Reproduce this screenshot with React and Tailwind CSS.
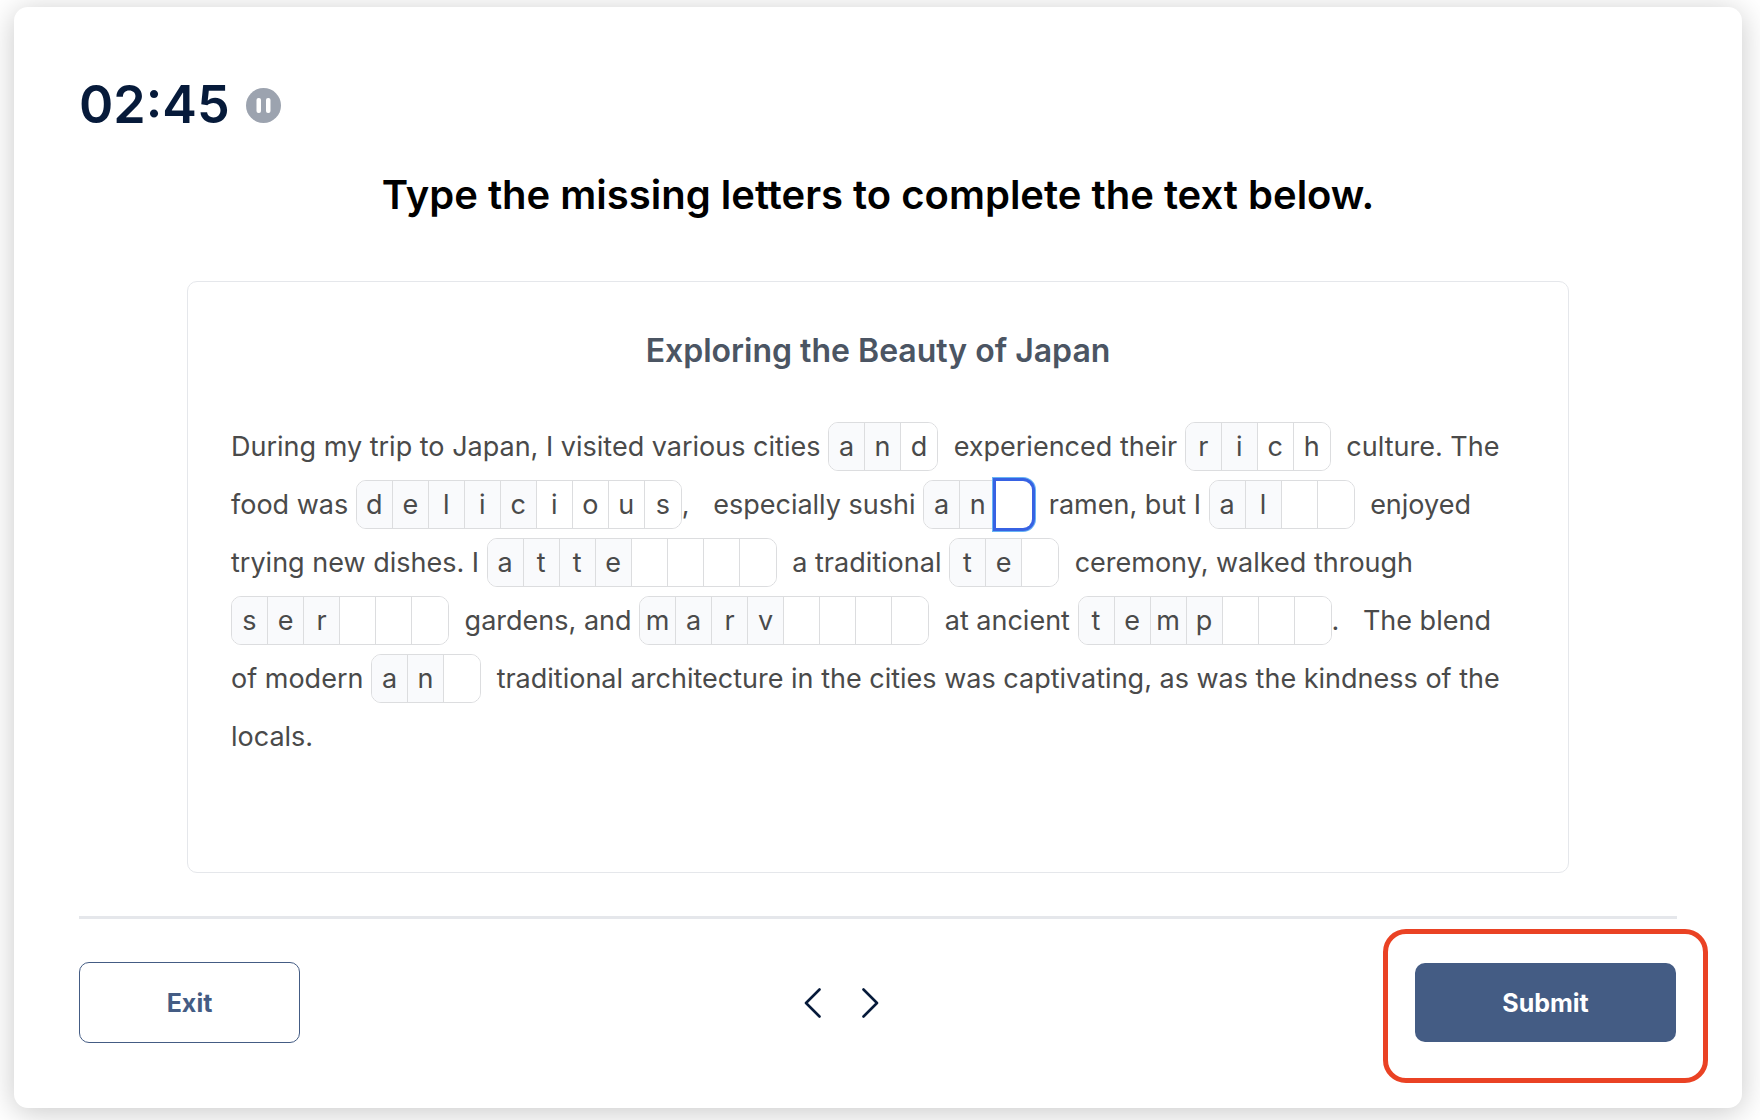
import { useState } from "react";

// "given" letters are fixed, "typed" is what the user filled in, "size" is the whole word
const passage = [
  "During my trip to Japan, I visited various cities ",
  { given: "an", typed: "d", size: 3 },
  " experienced their ",
  { given: "ri", typed: "ch", size: 4 },
  " culture. The food was ",
  { given: "delic", typed: "ious", size: 9, after: "," },
  " especially sushi ",
  { given: "an", typed: "", size: 3 },
  " ramen, but I ",
  { given: "al", typed: "", size: 4 },
  " enjoyed trying new dishes. I ",
  { given: "atte", typed: "", size: 8 },
  " a traditional ",
  { given: "te", typed: "", size: 3 },
  " ceremony, walked through ",
  { given: "ser", typed: "", size: 6 },
  " gardens, and ",
  { given: "marv", typed: "", size: 8 },
  " at ancient ",
  { given: "temp", typed: "", size: 7, after: "." },
  " The blend of modern ",
  { given: "an", typed: "", size: 3 },
  " traditional architecture in the cities was captivating, as was the kindness of the locals.",
];

function Word({ id, given, typed, size, after, active, setActive }) {
  const [letters, setLetters] = useState(typed.split(""));
  const blanks = Array.from({ length: size - given.length }, (_, i) => i);

  const onChange = (i, value) => {
    const next = [...letters];
    next[i] = value.slice(-1);
    setLetters(next);
  };

  return (
    <span className={after ? "mr-4 whitespace-nowrap" : "mr-2 whitespace-nowrap"}>
      <span className="inline-flex h-[49px] rounded-[10px] border border-[#dcdddf] align-baseline leading-none">
        {given.split("").map((letter, i) => (
          <span
            key={i}
            className="flex w-9 items-center justify-center border-r border-[#dcdddf] bg-[#f9fafc] first:rounded-l-[9px]"
          >
            {letter}
          </span>
        ))}
        {blanks.map((i) => (
          <input
            key={i}
            aria-label={`Missing letter ${i + 1} after ${given}`}
            value={letters[i] || ""}
            onChange={(e) => onChange(i, e.target.value)}
            onFocus={() => setActive(`${id}-${i}`)}
            className={
              active === `${id}-${i}`
                ? "relative w-9 bg-white text-center outline-none last:rounded-r-[9px] shadow-[0_0_0_3px_#3762e3,0_0_0_4px_#67b4f5]"
                : "w-9 border-r border-[#dcdddf] bg-white text-center outline-none last:rounded-r-[9px] last:border-r-0"
            }
          />
        ))}
      </span>
      {after}
    </span>
  );
}

function App() {
  const [paused, setPaused] = useState(false);
  const [active, setActive] = useState("7-0");

  return (
    <div className="flex min-h-screen bg-white pt-[7px] pr-[18px] pb-3 pl-[14px] font-['Inter',sans-serif]">
      <main className="flex flex-1 flex-col rounded-[14px] bg-white px-[65px] pt-[66px] pb-[65px] shadow-[0_4px_30px_rgba(0,0,0,0.22)]">
        <div className="flex items-center gap-4">
          <time className="text-[52px] leading-[64px] font-semibold text-[#061a3a]">02:45</time>
          <button type="button" aria-label={paused ? "Resume" : "Pause"} onClick={() => setPaused(!paused)}>
            <svg className="size-[35px]" viewBox="0 0 35 35">
              <circle cx="17.5" cy="17.5" r="17.5" fill="#9ca3af" />
              <rect x="10.5" y="10" width="4.5" height="15" rx="2" fill="#fff" />
              <rect x="20" y="10" width="4.5" height="15" rx="2" fill="#fff" />
            </svg>
          </button>
        </div>

        <h1 className="mt-8 text-center text-[40px] leading-[52px] font-semibold text-black">
          Type the missing letters to complete the text below.
        </h1>

        <section className="mx-[108px] mt-[60px] flex-1 rounded-[10px] border border-[#e5e7eb] px-[43px] pt-[49px]">
          <h2 className="text-center text-[32px] leading-10 font-semibold text-[#4b5563]">
            Exploring the Beauty of Japan
          </h2>
          <p className="mt-[47px] pr-1 text-[27px] leading-[58px] text-[#4a4a4a]">
            {passage.map((part, i) =>
              typeof part === "string" ? (
                part
              ) : (
                <Word key={i} id={i} {...part} active={active} setActive={setActive} />
              )
            )}
          </p>
        </section>

        <footer className="mt-[43px] flex items-center justify-between border-t-[3px] border-[#e5e7eb] pt-[43px]">
          <button
            type="button"
            className="h-[81px] w-[221px] rounded-[10px] border border-[#445c84] pt-0.5 text-[25px] font-bold text-[#445c84]"
          >
            Exit
          </button>
          <nav className="mr-8 flex gap-[41px] text-[#061a3a]">
            <button type="button" aria-label="Previous">
              <svg className="h-[30px] w-[17px]" viewBox="0 0 17 30" fill="none" stroke="currentColor" strokeWidth="2.6" strokeLinecap="round" strokeLinejoin="round">
                <path d="M15.5 1.5 2 15l13.5 13.5" />
              </svg>
            </button>
            <button type="button" aria-label="Next">
              <svg className="h-[30px] w-[17px]" viewBox="0 0 17 30" fill="none" stroke="currentColor" strokeWidth="2.6" strokeLinecap="round" strokeLinejoin="round">
                <path d="M1.5 1.5 15 15 1.5 28.5" />
              </svg>
            </button>
          </nav>
          <div className="relative mr-px">
            <button type="button" className="block h-[79px] w-[261px] rounded-[10px] bg-[#445c84] pt-0.5 text-[25px] font-bold text-white">
              Submit
            </button>
            <span className="pointer-events-none absolute -inset-x-8 -top-[34px] -bottom-[41px] rounded-[23px] border-[5px] border-[#ea4224]" />
          </div>
        </footer>
      </main>
    </div>
  );
}

export default App;
